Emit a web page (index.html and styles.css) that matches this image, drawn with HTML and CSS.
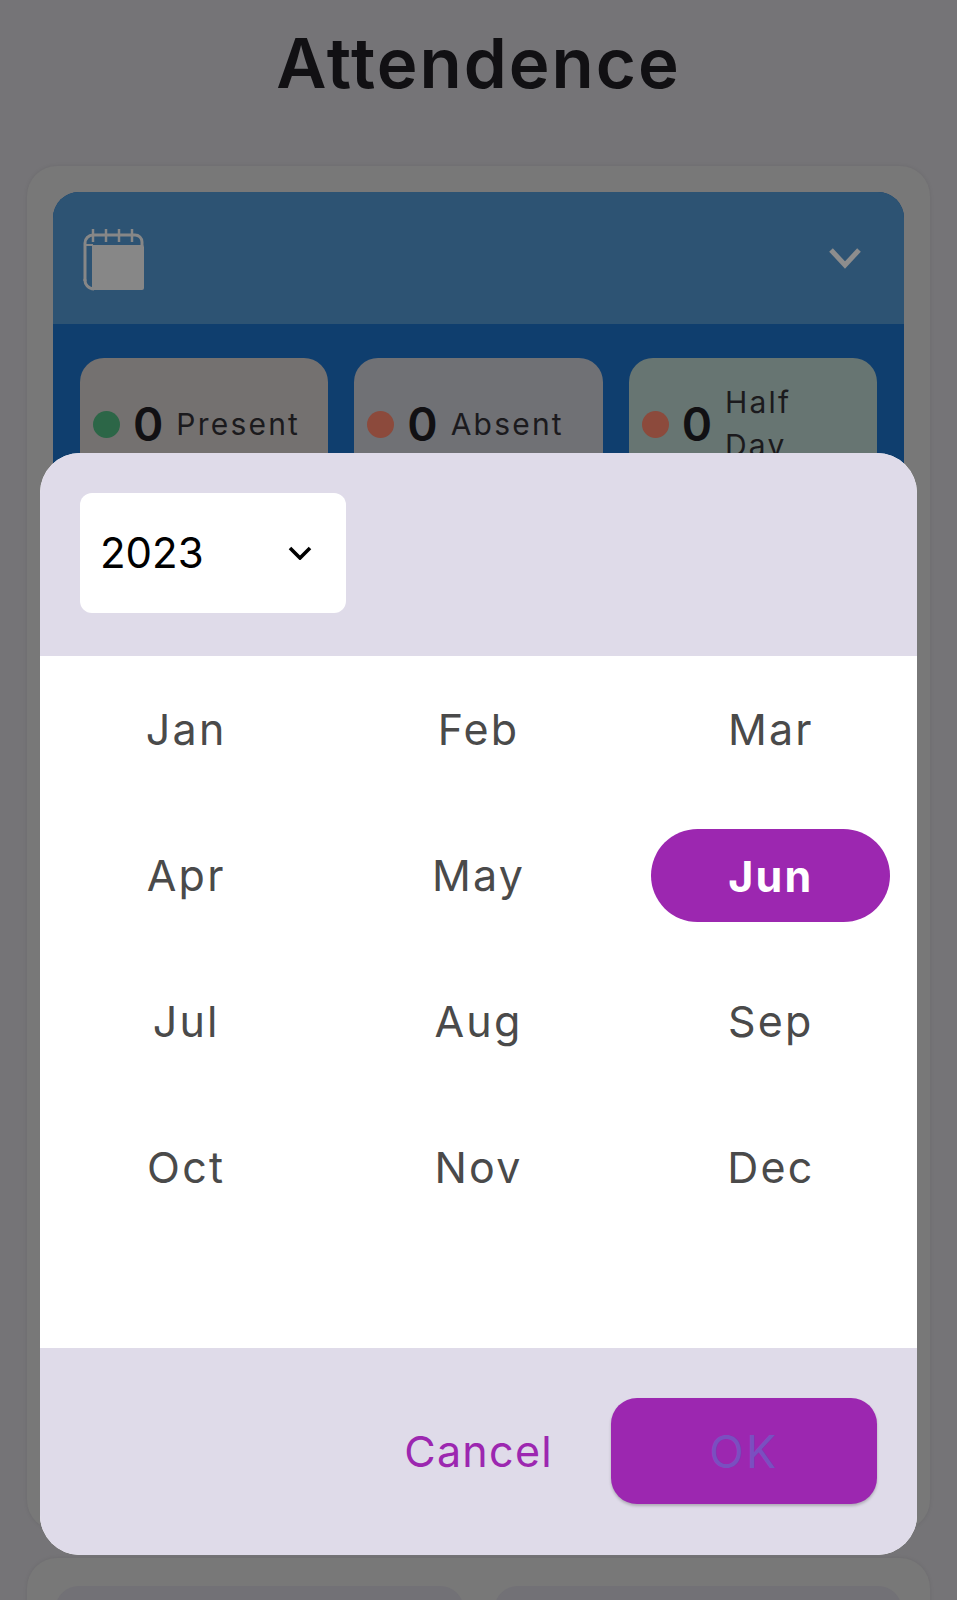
FILE: index.html
```html
<!DOCTYPE html>
<html lang="en">
<head>
  <meta charset="UTF-8">
  <title>Attendence</title>
  <link rel="stylesheet" href="styles.css">
</head>
<body>

  <div class="page">
    <h1>Attendence</h1>

    <div class="card">
      <div class="panel">
        <div class="panel-head">
          <svg class="cal-icon" viewBox="0 0 62 62" width="62" height="62">
            <path d="M2 52V14a8 8 0 0 1 8-8h42a7 7 0 0 1 7 7v4" fill="none" stroke="#878787" stroke-width="3"/>
            <path d="M10 0v13M23 0v13M36 0v13M49 0v13" stroke="#878787" stroke-width="2.5"/>
            <path d="M2 16h8" stroke="#878787" stroke-width="2"/>
            <path d="M9 16h50a2 2 0 0 1 2 2v41a2 2 0 0 1-2 2H9z" fill="#878787"/>
            <path d="M2 50a9 9 0 0 0 9 10" fill="none" stroke="#878787" stroke-width="3"/>
          </svg>
          <svg class="head-chevron" viewBox="0 0 32 22" width="32" height="22">
            <path d="M2 3l14 15L30 3" fill="none" stroke="#8d8d8d" stroke-width="5"/>
          </svg>
        </div>
        <div class="tiles">
          <div class="tile tile-present">
            <span class="dot dot-green"></span><span class="num">0</span><span class="tile-label">Present</span>
          </div>
          <div class="tile tile-absent">
            <span class="dot dot-red"></span><span class="num">0</span><span class="tile-label">Absent</span>
          </div>
          <div class="tile tile-half">
            <span class="dot dot-red"></span><span class="num">0</span><span class="tile-label">Half Day</span>
          </div>
        </div>
      </div>
    </div>

    <div class="card card-next">
      <div class="next-tile"></div>
      <div class="next-tile"></div>
    </div>
  </div>

  <!-- Month picker dialog -->
  <div class="dialog">
    <div class="dialog-head">
      <div class="year-select">
        <span>2023</span>
        <svg viewBox="0 0 24 14" width="24" height="14">
          <path d="M2 2l10 10L22 2" fill="none" stroke="#000" stroke-width="3.6"/>
        </svg>
      </div>
    </div>
    <div class="months">
      <div class="month">Jan</div>
      <div class="month">Feb</div>
      <div class="month">Mar</div>
      <div class="month">Apr</div>
      <div class="month">May</div>
      <div class="month selected">Jun</div>
      <div class="month">Jul</div>
      <div class="month">Aug</div>
      <div class="month">Sep</div>
      <div class="month">Oct</div>
      <div class="month">Nov</div>
      <div class="month">Dec</div>
    </div>
    <div class="dialog-foot">
      <div class="btn-cancel">Cancel</div>
      <div class="btn-ok">OK</div>
    </div>
  </div>

</body>
</html>
```

FILE: styles.css
```css
* {
  box-sizing: border-box;
  margin: 0;
  padding: 0;
}

body {
  width: 957px;
  height: 1600px;
  overflow: hidden;
  position: relative;
  background: #757477;
  font-family: 'Inter', 'Liberation Sans', sans-serif;
}

.page {
  height: 1600px;
  overflow: hidden;
}

h1 {
  height: 125px;
  padding-top: 19px;
  text-align: center;
  font-size: 69px;
  line-height: 88px;
  font-weight: 600;
  letter-spacing: 2px;
  color: #111013;
}

.card {
  margin: 41px 27px 0;
  height: 1364px;
  padding: 26px;
  border-radius: 30px;
  background: #787878;
  box-shadow: 0 0 4px rgba(0, 0, 0, 0.08);
}

.panel {
  height: 1200px;
  border-radius: 26px;
  overflow: hidden;
  background: #0f3e6e;
}

.panel-head {
  height: 132px;
  padding: 0 30px;
  display: flex;
  align-items: center;
  justify-content: space-between;
  background: #2d5373;
}

.cal-icon {
  margin-top: 3px;
}

.head-chevron {
  margin-right: 13px;
}

.tiles {
  display: flex;
  gap: 26px;
  padding: 34px 27px;
}

.tile {
  flex: 1;
  height: 200px;
  border-radius: 24px;
  padding: 0 13px 68px;
  display: flex;
  align-items: center;
}

.tile-present { background: #747170; }
.tile-absent { background: #707175; }
.tile-half { background: #677572; }

.dot {
  width: 27px;
  height: 27px;
  border-radius: 50%;
  flex-shrink: 0;
}

.dot-green { background: #2c6647; }
.dot-red { background: #8c4a3c; }

.num {
  margin: 0 13px 0 13px;
  font-size: 46px;
  font-weight: 600;
  color: #111013;
}

.tile-label {
  font-size: 30px;
  line-height: 43px;
  letter-spacing: 2.2px;
  color: #1b1a1d;
}

.tile-half .tile-label {
  width: 90px;
}

.card-next {
  margin-top: 28px;
  padding: 28px;
  display: flex;
  gap: 30px;
}

.next-tile {
  flex: 1;
  height: 200px;
  border-radius: 24px;
  background: #727176;
}

/* Dialog */
.dialog {
  position: absolute;
  left: 40px;
  top: 453px;
  width: 877px;
  height: 1102px;
  border-radius: 40px;
  overflow: hidden;
  display: flex;
  flex-direction: column;
  background: #fff;
}

.dialog-head {
  height: 203px;
  padding: 40px;
  background: #dfdbe9;
}

.year-select {
  width: 266px;
  height: 120px;
  padding: 0 34px 2px 20px;
  border-radius: 12px;
  background: #fff;
  display: flex;
  align-items: center;
  justify-content: space-between;
  font-size: 42px;
  color: #000;
}

.year-select svg {
  margin-top: 2px;
}

.months {
  height: 692px;
  display: grid;
  grid-template-columns: repeat(3, 1fr);
  grid-auto-rows: 146px;
  align-content: start;
  justify-items: center;
  align-items: center;
}

.month {
  width: 239px;
  height: 93px;
  border-radius: 47px;
  display: flex;
  align-items: center;
  justify-content: center;
  font-size: 43px;
  letter-spacing: 2.2px;
  color: #4a4a4a;
}

.month.selected {
  margin-top: 1px;
  background: #9c27b0;
  color: #fff;
  font-weight: 700;
}

.dialog-foot {
  flex: 1;
  padding: 50px 40px 0 0;
  display: flex;
  justify-content: flex-end;
  gap: 58px;
  background: #dfdbe9;
}

.btn-cancel,
.btn-ok {
  height: 106px;
  display: flex;
  align-items: center;
  font-size: 43px;
  letter-spacing: 1.3px;
}

.btn-cancel {
  color: #9c27b0;
}

.btn-ok {
  width: 266px;
  justify-content: center;
  border-radius: 26px;
  background: #9c27b0;
  color: #7a4fc0;
  font-size: 45px;
  letter-spacing: 2.5px;
  box-shadow: 0 2px 3px rgba(0, 0, 0, 0.22);
}
```
